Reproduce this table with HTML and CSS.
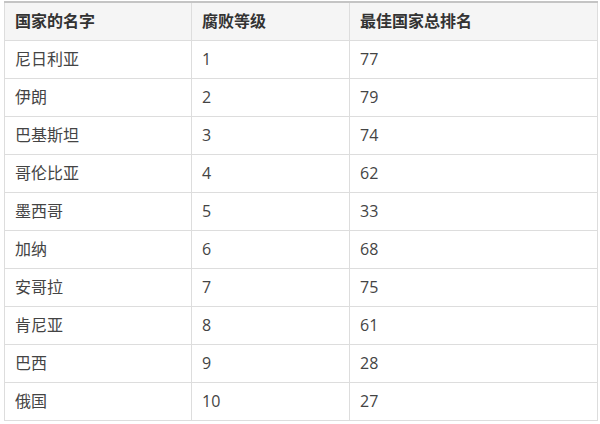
FILE: index.html
```html
<!DOCTYPE html>
<html lang="zh">
<head>
<meta charset="utf-8">
<link rel="stylesheet" href="styles.css">
</head>
<body>
<table class="rank-table">
  <colgroup>
    <col class="c1"><col class="c2"><col class="c3">
  </colgroup>
  <thead>
    <tr><th>国家的名字</th><th>腐败等级</th><th>最佳国家总排名</th></tr>
  </thead>
  <tbody>
    <tr><td>尼日利亚</td><td>1</td><td>77</td></tr>
    <tr><td>伊朗</td><td>2</td><td>79</td></tr>
    <tr><td>巴基斯坦</td><td>3</td><td>74</td></tr>
    <tr><td>哥伦比亚</td><td>4</td><td>62</td></tr>
    <tr><td>墨西哥</td><td>5</td><td>33</td></tr>
    <tr><td>加纳</td><td>6</td><td>68</td></tr>
    <tr><td>安哥拉</td><td>7</td><td>75</td></tr>
    <tr><td>肯尼亚</td><td>8</td><td>61</td></tr>
    <tr><td>巴西</td><td>9</td><td>28</td></tr>
    <tr><td>俄国</td><td>10</td><td>27</td></tr>
  </tbody>
</table>
</body>
</html>
```

FILE: styles.css
```css
html, body {
  margin: 0;
  padding: 0;
  background: #ffffff;
}
body {
  padding: 1px 0 0 4px;
  font-family: "Open Sans", "Noto Sans CJK SC", sans-serif;
  color: #333333;
}
.rank-table {
  border-collapse: collapse;
  table-layout: fixed;
  width: 593px;
  font-size: 16px;
  border-top: 2px solid #c4c4c4;
}
.c1 { width: 187px; }
.c2 { width: 158px; }
.c3 { width: 248px; }
.rank-table th,
.rank-table td {
  border: 1px solid #dddddd;
  padding: 0 0 2px 10px;
  text-align: left;
  vertical-align: middle;
  line-height: 20px;
}
.rank-table th {
  height: 35px;
  background: #f5f5f5;
  font-weight: bold;
  color: #333333;
  border-top: 2px solid #c4c4c4;
}
.rank-table td {
  height: 35px;
  font-weight: normal;
  color: #444444;
}
```
